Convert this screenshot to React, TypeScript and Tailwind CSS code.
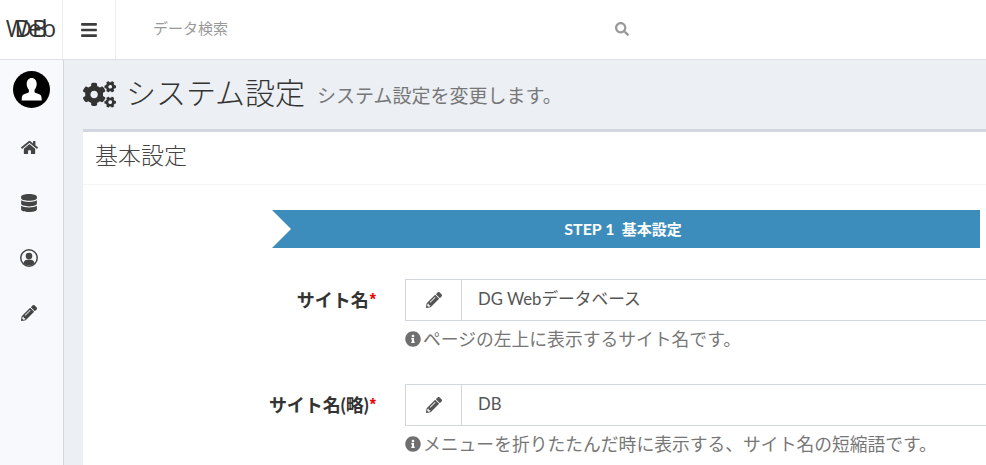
import type { ReactNode } from "react";
import { FaBars, FaCogs, FaDatabase, FaHome, FaInfoCircle, FaPencilAlt, FaSearch } from "react-icons/fa";

const fontStack = "font-['Lato','Noto_Sans_CJK_JP',sans-serif]";

interface FieldProps {
  label: string;
  value: string;
  help: string;
}

function Field({ label, value, help }: FieldProps) {
  return (
    <div className="flex h-[105px]">
      <label className="w-[322px] h-[42px] flex items-center justify-end pr-[29px] text-[18px] font-bold text-[#333]">
        {label}
        <span className="text-[#e00] ml-[1px] text-[16px] font-['Liberation_Sans',sans-serif]">*</span>
      </label>
      <div className="flex-1">
        <div className="flex h-[42px] border border-[#d2d6de] border-r-0">
          <div className="w-[56px] shrink-0 flex items-center justify-center border-r border-[#d2d6de] text-[#555] text-[16px]">
            <FaPencilAlt />
          </div>
          <div className="flex-1 flex items-center pl-[16px] text-[16.7px] text-[#555]">{value}</div>
        </div>
        <p className="flex items-center h-[24px] mt-[6px] text-[17.8px] text-[#777]">
          <FaInfoCircle className="text-[16px] mr-[2px] text-[#6f6f6f]" />
          {help}
        </p>
      </div>
    </div>
  );
}

function NavItem({ children }: { children: ReactNode }) {
  return <div className="h-[55px] flex items-center justify-center pr-[5px]">{children}</div>;
}

export default function App() {
  return (
    <div className={`w-[986px] h-[465px] overflow-hidden bg-white ${fontStack}`}>
      <header className="h-[60px] flex border-b border-[#dcdfe4]">
        <div className="relative w-[63px] border-r border-[#eee] text-[24px] text-[#333] font-['Open_Sans',sans-serif]">
          <span className="absolute inset-0 flex items-center justify-center pb-[4px]">Web</span>
          <span className="absolute inset-0 flex items-center justify-center pb-[4px]">DB</span>
        </div>
        <div className="w-[53px] border-r border-[#eee] flex items-center justify-center text-[#3c3c3c] text-[18px]">
          <FaBars />
        </div>
        <div className="w-[520px] flex items-center justify-between pl-[37px] pb-[2px] text-[15px] text-[#999]">
          <span>データ検索</span>
          <FaSearch className="text-[#999] text-[14px] mr-[7px]" />
        </div>
      </header>
      <div className="flex h-[405px]">
        <aside className="w-[64px] bg-[#f8f9fc] border-r border-[#d2d6e0] flex flex-col pt-[11px] text-[#444]">
          <svg viewBox="0 0 37 37" className="w-[37px] h-[37px] ml-[13px] mb-[12px]">
            <circle cx="18.5" cy="18.5" r="18.5" fill="#000" />
            <path
              d="M18.7 7c3 0 5 2.6 5 6 0 2.4-1 4.6-2.2 5.8v2.2c0 1 4.3 1.6 6 3 .9.7 1.2 2.6 1.2 5.6H8.7c0-3 .3-4.9 1.2-5.6 1.7-1.4 6-2 6-3v-2.2C14.7 17.6 13.7 15.4 13.7 13c0-3.4 2-6 5-6z"
              fill="#fff"
            />
          </svg>
          <NavItem>
            <FaHome className="text-[17px]" />
          </NavItem>
          <NavItem>
            <FaDatabase className="text-[18px]" />
          </NavItem>
          <NavItem>
            <svg viewBox="0 0 18 18" className="w-[18px] h-[18px]">
              <circle cx="9" cy="9" r="8.2" fill="none" stroke="#444" strokeWidth="1.5" />
              <circle cx="9" cy="7" r="3.3" fill="#444" />
              <path d="M3.4 14.2c.6-2.6 2.6-3.6 5.6-3.6s5 1 5.6 3.6C13 15.7 11.2 16.4 9 16.4s-4-.7-5.6-2.2z" fill="#444" />
            </svg>
          </NavItem>
          <NavItem>
            <FaPencilAlt className="text-[16px]" />
          </NavItem>
        </aside>
        <main className="flex-1 bg-[#ecf0f5] pl-[19px]">
          <div className="h-[69px] flex items-center text-[#333]">
            <FaCogs className="text-[33px] mr-[10px] text-[#333]" />
            <h1 className="text-[30px] font-light pb-[4px]">システム設定</h1>
            <small className="text-[19px] text-[#777] ml-[12px] mt-[4px]">システム設定を変更します。</small>
          </div>
          <section className="bg-white border-t-[3px] border-[#d2d6de] h-[340px]">
            <h2 className="h-[53px] border-b border-[#f4f4f4] flex items-center pl-[12px] text-[23px] font-light text-[#444] pb-[5px]">基本設定</h2>
            <div className="pt-[25px]">
              <div className="ml-[189px] mr-[6px] h-[38px] pr-[6px] bg-[#3c8dbc] text-white text-[15px] font-bold flex items-center justify-center [clip-path:polygon(0_0,100%_0,100%_100%,0_100%,19px_50%)]">
                <span className="text-[16px]">STEP 1</span>&nbsp; 基本設定
              </div>
              <div className="mt-[31px]">
                <Field label="サイト名" value="DG Webデータベース" help="ページの左上に表示するサイト名です。" />
                <Field label="サイト名(略)" value="DB" help="メニューを折りたたんだ時に表示する、サイト名の短縮語です。" />
              </div>
            </div>
          </section>
        </main>
      </div>
    </div>
  );
}
